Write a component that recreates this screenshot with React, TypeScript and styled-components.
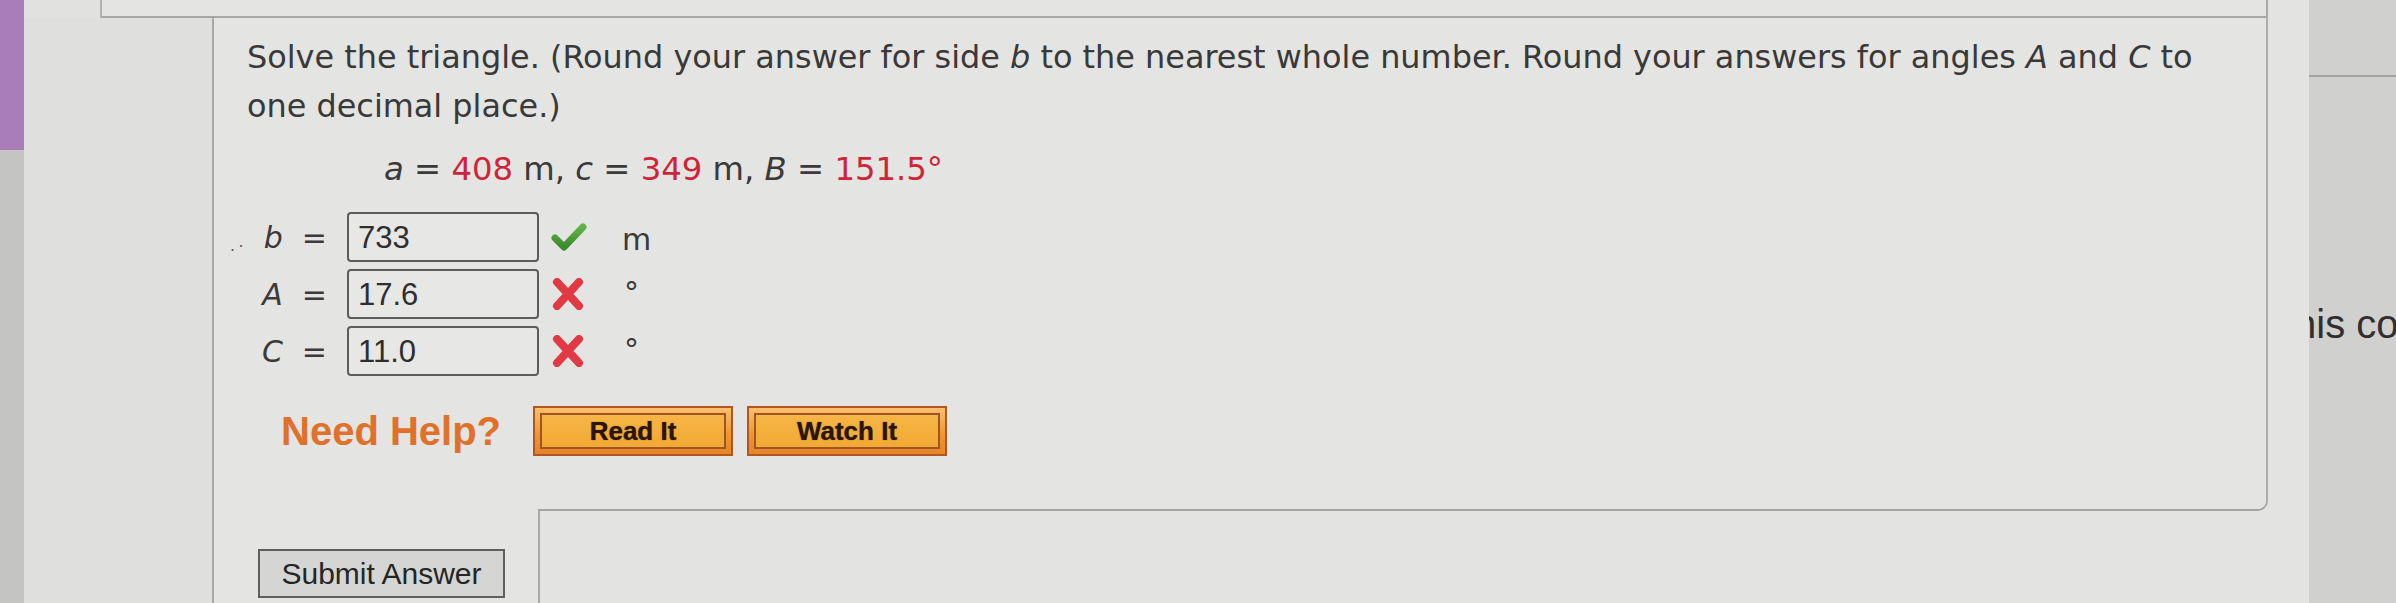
import React from 'react'
import styled, {createGlobalStyle} from 'styled-components'

const GlobalStyle = createGlobalStyle`
  html, body {
    margin: 0;
    padding: 0;
    background: #e1e1df;
  }
`

const Page = styled.div`
  display: flex;
  width: 2396px;
  height: 603px;
  overflow: hidden;
  background: #e1e1df;
  color: #363636;
  font-family: 'Liberation Sans', Arial, sans-serif;
`

/* left edge of the window */
const Rail = styled.div`
  width: 24px;
  flex: none;
  display: flex;
  flex-direction: column;
  background: #c4c4c2;
`

const RailTab = styled.div`
  height: 150px;
  background: #a97db9;
`

const Main = styled.div`
  width: 2244px;
  flex: none;
  display: flex;
  flex-direction: column;
`

const TopStrip = styled.div`
  height: 18px;
  margin-left: 76px;
  flex: none;
  box-sizing: border-box;
  border-left: 2px solid #b2b2b0;
  border-right: 2px solid #a9a9a7;
  border-bottom: 2px solid #a6a6a4;
  background: #e4e4e2;
`

const Body = styled.div`
  flex: 1;
  display: flex;
`

const Gutter = styled.div`
  width: 188px;
  flex: none;
  background: #dfdfdd;
`

const Question = styled.div`
  flex: 1;
  display: flex;
  flex-direction: column;
  border-left: 2px solid #a8a8a6;
  background: #e4e4e2;
`

const Panel = styled.div`
  display: flex;
  flex-direction: column;
  padding: 15px 20px 0 33px;
  border-right: 2px solid #acacaa;
`

const Prompt = styled.p`
  margin: 0;
  font-family: 'DejaVu Sans', Verdana, sans-serif;
  font-size: 31.9px;
  line-height: 49px;
  color: #393939;
`

const Given = styled.div`
  margin: 18px 0 0 137px;
  font-family: 'DejaVu Sans', Verdana, sans-serif;
  font-size: 32.3px;
  line-height: 40px;
  white-space: pre;
  color: #3a3a3a;
`

const Var = styled.i`
  font-style: italic;
`

const Num = styled.span`
  color: #cf2438;
`

const Answers = styled.div`
  display: flex;
  flex-direction: column;
  gap: 7px;
  margin: 23px 0 0 -17px;
`

const Row = styled.div`
  display: flex;
  align-items: center;
  height: 50px;
`

const Dots = styled.span`
  width: 20px;
  flex: none;
  align-self: flex-end;
  margin-bottom: 6px;
  font-size: 18px;
  letter-spacing: 3px;
  color: #5d5d5d;
`

const Label = styled.div`
  width: 77px;
  flex: none;
  display: flex;
  justify-content: flex-end;
  gap: 19px;
  font-family: 'DejaVu Sans', Verdana, sans-serif;
  font-size: 30px;
  color: #3a3a3a;
`

const Field = styled.div`
  width: 192px;
  height: 50px;
  flex: none;
  margin-left: 20px;
  box-sizing: border-box;
  display: flex;
  align-items: center;
  padding: 2px 0 0 9px;
  border: 2px solid #5c5c5c;
  border-radius: 4px;
  background: #e7e7e5;
  font-size: 31px;
  color: #2e2e2e;
`

const Mark = styled.svg`
  width: 36px;
  height: 32px;
  flex: none;
  margin-left: 12px;
`

const Unit = styled.span<{$raised?: boolean}>`
  margin-left: ${p => (p.$raised ? 37 : 35)}px;
  font-family: 'DejaVu Sans', Verdana, sans-serif;
  font-size: 30px;
  color: #3a3a3a;
  position: relative;
  top: ${p => (p.$raised ? -2 : 2)}px;
`

const HelpRow = styled.div`
  display: flex;
  align-items: center;
  margin: 30px 0 0 34px;
`

const HelpLabel = styled.span`
  width: 252px;
  flex: none;
  font-size: 40px;
  font-weight: bold;
  color: #e0712b;
`

const HelpButton = styled.button`
  width: 200px;
  height: 50px;
  box-sizing: border-box;
  padding: 5px;
  margin-right: 14px;
  display: flex;
  border: 2px solid #b2551e;
  background: linear-gradient(#f7c070, #ee9530 60%, #e5852a);
  cursor: pointer;
`

const HelpFace = styled.span`
  flex: 1;
  display: flex;
  align-items: center;
  justify-content: center;
  border: 2px solid #9e5424;
  background: linear-gradient(#f6b545, #f1a933);
  font-family: 'Liberation Sans', Arial, sans-serif;
  font-size: 26px;
  font-weight: bold;
  color: #2a1608;
  text-shadow: 0 0 1px #5a3510;
`

const PanelFoot = styled.div`
  display: flex;
  height: 55px;
  flex: none;
`

const FootGap = styled.div`
  width: 324px;
  flex: none;
`

const FootEdge = styled.div`
  flex: 1;
  box-sizing: border-box;
  border-right: 2px solid #acacaa;
  border-bottom: 2px solid #a4a4a2;
  border-bottom-right-radius: 10px;
`

const Footer = styled.div`
  flex: 1;
  display: flex;
`

const SubmitCell = styled.div`
  width: 324px;
  flex: none;
  padding: 38px 0 0 44px;
  box-sizing: border-box;
`

const SubmitButton = styled.button`
  width: 247px;
  height: 49px;
  box-sizing: border-box;
  border: 2px solid #5e5e5e;
  background: #d5d5d3;
  font-family: 'Liberation Sans', Arial, sans-serif;
  font-size: 30px;
  color: #252525;
  padding: 0;
  cursor: pointer;
`

const LowerBox = styled.div`
  flex: 1;
  border-left: 2px solid #aaaaa8;
  background: #e3e3e1;
`

/* the neighbouring pane on the right */
const Side = styled.div`
  flex: 1;
  display: flex;
  background: #e3e3e1;
`

const SideGap = styled.div`
  width: 41px;
  flex: none;
`

const Shade = styled.div`
  flex: 1;
  display: flex;
  flex-direction: column;
  overflow: hidden;
  background: #d0d0ce;
`

const ShadeHead = styled.div`
  height: 75px;
  flex: none;
  border-bottom: 2px solid #a3a3a1;
`

const ShadeText = styled.p`
  margin: 226px 0 0 -26px;
  font-size: 40px;
  line-height: 42px;
  white-space: nowrap;
  color: #2f2f2f;
`

const Check = () => (
  <Mark viewBox='0 0 36 32'>
    <defs>
      <linearGradient id='ok' x1='0' y1='0' x2='0' y2='1'>
        <stop offset='0' stopColor='#62b24a' />
        <stop offset='1' stopColor='#3b8a2e' />
      </linearGradient>
    </defs>
    <path
      d='M4 17 L13 26 L32 6'
      fill='none'
      stroke='url(#ok)'
      strokeWidth='7'
      strokeLinecap='round'
      strokeLinejoin='round'
    />
  </Mark>
)

const Cross = () => (
  <Mark viewBox='0 0 36 32'>
    <path
      d='M6 4 L28 28 M28 4 L6 28'
      fill='none'
      stroke='#e13a44'
      strokeWidth='8'
      strokeLinecap='round'
    />
  </Mark>
)

type Answer = {
  name: string
  value: string
  ok: boolean
  unit: string
}

const answers: Answer[] = [
  {name: 'b', value: '733', ok: true, unit: 'm'},
  {name: 'A', value: '17.6', ok: false, unit: '°'},
  {name: 'C', value: '11.0', ok: false, unit: '°'},
]

export default function App() {
  return (
    <>
      <GlobalStyle />
      <Page>
        <Rail>
          <RailTab />
        </Rail>
        <Main>
          <TopStrip />
          <Body>
            <Gutter />
            <Question>
              <Panel>
                <Prompt>
                  Solve the triangle. (Round your answer for side <Var>b</Var> to the nearest
                  whole number. Round your answers for angles <Var>A</Var> and <Var>C</Var> to
                  one decimal place.)
                </Prompt>
                <Given>
                  <Var>a</Var> = <Num>408</Num> m, <Var>c</Var> = <Num>349</Num> m, <Var>B</Var>{' '}
                  = <Num>151.5°</Num>
                </Given>
                <Answers>
                  {answers.map((item, index) => (
                    <Row key={item.name}>
                      <Dots>{index === 0 ? '.·' : ''}</Dots>
                      <Label>
                        <Var>{item.name}</Var>
                        <span>=</span>
                      </Label>
                      <Field>{item.value}</Field>
                      {item.ok ? <Check /> : <Cross />}
                      <Unit $raised={item.unit === '°'}>{item.unit}</Unit>
                    </Row>
                  ))}
                </Answers>
                <HelpRow>
                  <HelpLabel>Need Help?</HelpLabel>
                  <HelpButton>
                    <HelpFace>Read It</HelpFace>
                  </HelpButton>
                  <HelpButton>
                    <HelpFace>Watch It</HelpFace>
                  </HelpButton>
                </HelpRow>
              </Panel>
              <PanelFoot>
                <FootGap />
                <FootEdge />
              </PanelFoot>
              <Footer>
                <SubmitCell>
                  <SubmitButton>Submit Answer</SubmitButton>
                </SubmitCell>
                <LowerBox />
              </Footer>
            </Question>
          </Body>
        </Main>
        <Side>
          <SideGap />
          <Shade>
            <ShadeHead />
            <ShadeText>this content</ShadeText>
          </Shade>
        </Side>
      </Page>
    </>
  )
}
